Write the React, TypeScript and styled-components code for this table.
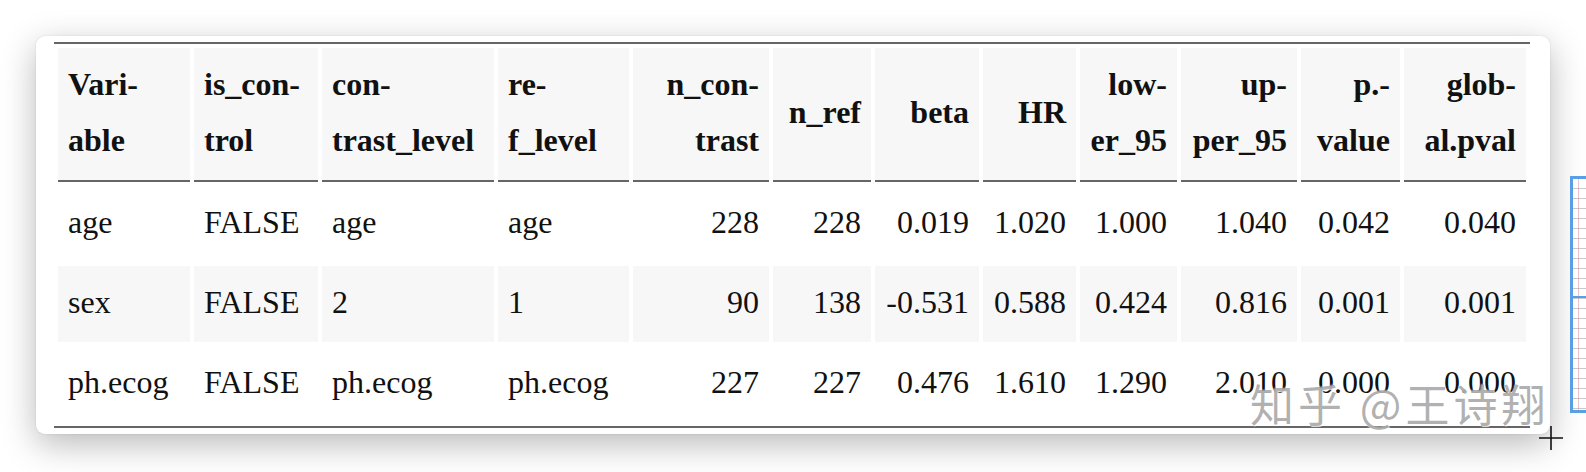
import React from "react";
import styled, { createGlobalStyle } from "styled-components";

const GlobalStyle = createGlobalStyle`
  html, body {
    margin: 0;
    padding: 0;
    background: #ffffff;
  }
  body {
    width: 1586px;
    height: 472px;
    overflow: hidden;
    font-family: "Liberation Serif", "Times New Roman", serif;
    color: #111;
  }
`;

const Desktop = styled.div`
  position: relative;
  width: 1586px;
  height: 472px;
  padding: 36px 0 0 36px;
  box-sizing: border-box;
`;

const Card = styled.div`
  width: 1514px;
  box-sizing: border-box;
  padding: 6px 20px 6px 18px;
  background: #ffffff;
  border-radius: 9px;
  box-shadow: 0 10px 34px rgba(0, 0, 0, 0.28), 0 0 2px rgba(0, 0, 0, 0.12);
`;

const Table = styled.table`
  width: 1476px;
  table-layout: fixed;
  border-collapse: separate;
  border-spacing: 4px;
  border-top: 2px solid #666;
  border-bottom: 2px solid #666;
  font-size: 32px;
  line-height: 56px;
`;

const HeadCell = styled.th<{ $right?: boolean; $w: number }>`
  width: ${(p) => p.$w}px;
  box-sizing: border-box;
  padding: 8px 10px 12px;
  background: #f7f7f7;
  border-bottom: 2px solid #666;
  font-weight: bold;
  text-align: ${(p) => (p.$right ? "right" : "left")};
  vertical-align: middle;
  white-space: nowrap;
`;

const Row = styled.tr<{ $striped?: boolean }>`
  & > td {
    background: ${(p) => (p.$striped ? "#f7f7f7" : "#ffffff")};
  }
`;

const Cell = styled.td<{ $right?: boolean }>`
  box-sizing: border-box;
  padding: 8px 10px 12px;
  text-align: ${(p) => (p.$right ? "right" : "left")};
  vertical-align: middle;
  white-space: nowrap;
`;

const Watermark = styled.div`
  position: absolute;
  left: 1250px;
  top: 376px;
  font-family: "Noto Sans CJK SC", "Noto Sans", sans-serif;
  font-size: 44px;
  line-height: 54px;
  letter-spacing: 4px;
  color: rgba(110, 110, 110, 0.55);
  text-shadow: 0 0 2px rgba(255, 255, 255, 0.9), 1px 1px 0 rgba(255, 255, 255, 0.7);
  white-space: nowrap;
  pointer-events: none;
`;

const SideWidget = styled.div`
  position: absolute;
  left: 1570px;
  top: 176px;
  width: 30px;
  height: 237px;
  box-sizing: border-box;
  border: 3px solid #5a9fe6;
  background-color: #ffffff;
  background-image: linear-gradient(
      to bottom,
      transparent 117px,
      #5a9fe6 117px,
      #5a9fe6 119px,
      transparent 119px
    ),
    linear-gradient(
      to right,
      transparent 5px,
      rgba(220, 150, 160, 0.55) 5px,
      rgba(220, 150, 160, 0.55) 6px,
      transparent 6px
    ),
    repeating-linear-gradient(
      to bottom,
      transparent 0,
      transparent 9px,
      #c9c9c9 9px,
      #c9c9c9 10px
    );
`;

const Cursor = styled.svg`
  position: absolute;
  left: 1538px;
  top: 425px;
`;

type Col = { head: React.ReactNode; w: number; right?: boolean };

const cols: Col[] = [
  { head: <>Vari-<br />able</>, w: 132 },
  { head: <>is_con-<br />trol</>, w: 124 },
  { head: <>con-<br />trast_level</>, w: 172 },
  { head: <>re-<br />f_level</>, w: 131 },
  { head: <>n_con-<br />trast</>, w: 136, right: true },
  { head: "n_ref", w: 98, right: true },
  { head: "beta", w: 104, right: true },
  { head: "HR", w: 93, right: true },
  { head: <>low-<br />er_95</>, w: 97, right: true },
  { head: <>up-<br />per_95</>, w: 116, right: true },
  { head: <>p.-<br />value</>, w: 99, right: true },
  { head: <>glob-<br />al.pval</>, w: 122, right: true },
];

const rows: string[][] = [
  ["age", "FALSE", "age", "age", "228", "228", "0.019", "1.020", "1.000", "1.040", "0.042", "0.040"],
  ["sex", "FALSE", "2", "1", "90", "138", "-0.531", "0.588", "0.424", "0.816", "0.001", "0.001"],
  ["ph.ecog", "FALSE", "ph.ecog", "ph.ecog", "227", "227", "0.476", "1.610", "1.290", "2.010", "0.000", "0.000"],
];

export default function App() {
  return (
    <>
      <GlobalStyle />
      <Desktop>
        <Card>
          <Table>
            <thead>
              <tr>
                {cols.map((c, i) => (
                  <HeadCell key={i} $w={c.w} $right={c.right}>
                    {c.head}
                  </HeadCell>
                ))}
              </tr>
            </thead>
            <tbody>
              {rows.map((r, ri) => (
                <Row key={ri} $striped={ri === 1}>
                  {r.map((v, ci) => (
                    <Cell key={ci} $right={cols[ci].right}>
                      {v}
                    </Cell>
                  ))}
                </Row>
              ))}
            </tbody>
          </Table>
        </Card>
        <SideWidget />
        <Watermark>知乎 @王诗翔</Watermark>
        <Cursor width="26" height="26" viewBox="0 0 26 26">
          <path d="M13 1 V25 M1 13 H25" stroke="#111" strokeWidth="1.6" fill="none" />
        </Cursor>
      </Desktop>
    </>
  );
}
